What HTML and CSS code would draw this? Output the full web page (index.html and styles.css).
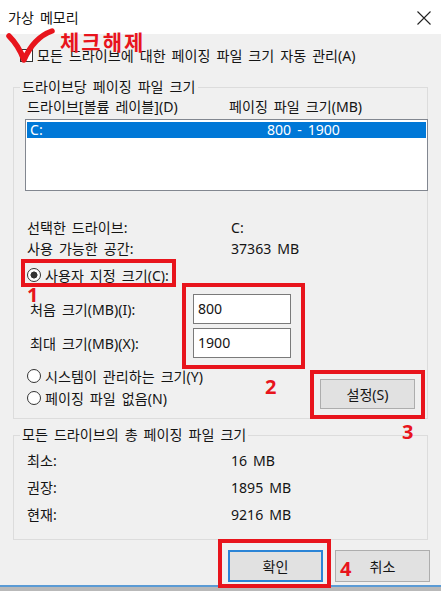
FILE: index.html
```html
<!DOCTYPE html>
<html lang="ko">
<head>
<meta charset="utf-8">
<title>가상 메모리</title>
<link rel="stylesheet" href="styles.css">
</head>
<body>
<div class="titlebar">
  <span class="title">가상 메모리</span>
  <svg class="close" width="14" height="14" viewBox="0 0 14 14"><path d="M0.5 0.5L13.5 13.5M13.5 0.5L0.5 13.5" stroke="#222" stroke-width="1.1" fill="none"/></svg>
</div>

<div class="check-row"><span class="checkbox"></span><span>모든 드라이브에 대한 페이징 파일 크기 자동 관리(A)</span></div>

<fieldset class="group group-drive">
  <legend>드라이브당 페이징 파일 크기</legend>
  <div class="list-head"><span class="col-drive">드라이브[볼륨 레이블](D)</span><span>페이징 파일 크기(MB)</span></div>
  <div class="listbox">
    <div class="list-row selected"><span class="col-name">C:</span><span>800 - 1900</span></div>
  </div>
  <div class="info">
    <span>선택한 드라이브:</span><span>C:</span>
    <span>사용 가능한 공간:</span><span>37363 MB</span>
  </div>
  <div class="radio-row first"><span class="radio checked"></span><span>사용자 지정 크기(C):</span></div>
  <div class="size-row first"><span class="size-label">처음 크기(MB)(I):</span><span class="input">800</span></div>
  <div class="size-row"><span class="size-label">최대 크기(MB)(X):</span><span class="input">1900</span></div>
  <div class="bottom-row">
    <div class="radios">
      <div class="radio-row"><span class="radio"></span><span>시스템이 관리하는 크기(Y)</span></div>
      <div class="radio-row"><span class="radio"></span><span>페이징 파일 없음(N)</span></div>
    </div>
    <button class="btn btn-set">설정(S)</button>
  </div>
</fieldset>

<fieldset class="group group-total">
  <legend>모든 드라이브의 총 페이징 파일 크기</legend>
  <div class="totals">
    <span>최소:</span><span>16 MB</span>
    <span>권장:</span><span>1895 MB</span>
    <span>현재:</span><span>9216 MB</span>
  </div>
</fieldset>

<div class="buttons">
  <button class="btn btn-default">확인</button>
  <button class="btn">취소</button>
</div>
<div class="frame-bottom"></div>

<svg class="mark" width="60" height="40" viewBox="0 25 60 40"><path d="M9 36 C14 41 20 49 24 60 C30 46 38 36 52 31" stroke="#e8141c" stroke-width="5.5" stroke-linecap="round" stroke-linejoin="round" fill="none"/></svg>
<span class="note">체크해제</span>
<div class="redbox box1"></div>
<div class="redbox box2"></div>
<div class="redbox box3"></div>
<div class="redbox box4"></div>
<span class="num n1">1</span>
<span class="num n2">2</span>
<span class="num n3">3</span>
<span class="num n4">4</span>
</body>
</html>
```

FILE: styles.css
```css
html, body {
  margin: 0;
  padding: 0;
}
body {
  width: 441px;
  height: 591px;
  background: #f0f0f0;
  font-family: "Noto Sans", "Noto Sans CJK KR", sans-serif;
  font-size: 14.1px;
  word-spacing: 2.3px;
  color: #141414;
  position: relative;
  overflow: hidden;
}
.titlebar {
  height: 34px;
  background: #fff;
  display: flex;
  align-items: center;
  justify-content: space-between;
  padding: 0 10px 0 8px;
  box-sizing: border-box;
}
.close {
  display: block;
  margin-top: 2px;
}
.check-row {
  display: flex;
  align-items: center;
  gap: 4px;
  height: 20px;
  margin: 11px 0 0 20px;
}
.checkbox {
  width: 13px;
  height: 13px;
  border: 1px solid #333;
  background: #fff;
  box-sizing: border-box;
}
.group {
  margin: 13px 13px 0;
  padding: 0 0 9px 11px;
  border: 1px solid #dcdcdc;
  min-width: 0;
}
.group legend {
  padding: 0 2px;
  margin-left: -5px;
  line-height: 18px;
}
.group-total {
  margin-top: 7px;
  padding-bottom: 11px;
}
.list-head {
  display: flex;
  height: 18px;
  line-height: 18px;
  margin-top: 2px;
  padding-left: 2px;
}
.col-drive {
  width: 202px;
}
.listbox {
  margin: 3px -1px 0 0;
  height: 72px;
  border: 1px solid #828790;
  background: #fff;
  box-sizing: border-box;
  padding: 2px 1px;
}
.list-row {
  display: flex;
  height: 16px;
  line-height: 16px;
  padding-left: 3px;
}
.list-row.selected {
  background: #0078d7;
  color: #fff;
}
.col-name {
  width: 237px;
}
.info {
  display: grid;
  grid-template-columns: 204px auto;
  grid-auto-rows: 21px;
  line-height: 21px;
  margin-top: 26px;
  padding-left: 2px;
}
.radio-row {
  display: flex;
  align-items: center;
  gap: 4px;
  height: 22px;
  padding-left: 2px;
}
.radio-row.first {
  margin-top: 5px;
}
.radio {
  width: 14px;
  height: 14px;
  border-radius: 50%;
  border: 1px solid #333;
  background: #fff;
  box-sizing: border-box;
}
.radio.checked {
  background: radial-gradient(circle, #333 0 3.2px, #fff 3.8px);
}
.size-row {
  display: flex;
  align-items: center;
  height: 30px;
  padding-left: 5px;
  margin-top: 4px;
}
.size-row.first {
  margin-top: 8px;
}
.size-label {
  width: 163px;
}
.input {
  width: 98px;
  height: 30px;
  border: 1px solid #7a7a7a;
  background: #fff;
  box-sizing: border-box;
  padding-left: 4px;
  line-height: 28px;
}
.bottom-row {
  display: flex;
  justify-content: space-between;
  align-items: flex-end;
  margin-top: 7px;
}
.btn {
  width: 95px;
  height: 30px;
  background: #e1e1e1;
  border: 1px solid #adadad;
  font: inherit;
  word-spacing: inherit;
  color: inherit;
  padding: 0;
  box-sizing: border-box;
}
.btn-set {
  margin-right: 12px;
}
.totals {
  display: grid;
  grid-template-columns: 204px auto;
  grid-auto-rows: 27px;
  line-height: 27px;
  margin-top: 3px;
  padding-left: 2px;
}
.buttons {
  display: flex;
  justify-content: flex-end;
  gap: 12px;
  margin-top: 10px;
  padding-right: 11px;
}
.buttons .btn {
  height: 32px;
}
.btn-default {
  border: 2px solid #2b84d6;
}
.frame-bottom {
  margin-top: 3px;
  height: 4px;
  border-top: 2px solid #5b9bd5;
  background: #b9b9b9;
}

/* annotations overlaid on the screenshot */
.mark {
  position: absolute;
  left: 0;
  top: 25px;
}
.note {
  position: absolute;
  left: 60px;
  top: 30px;
  color: #e8141c;
  font-family: "Noto Sans CJK KR", sans-serif;
  font-size: 21px;
  font-weight: 700;
  letter-spacing: 2px;
  line-height: 22px;
}
.redbox {
  position: absolute;
  border: 4px solid #e8141c;
  box-sizing: border-box;
}
.box1 { left: 21px; top: 259px; width: 155px; height: 28px; }
.box2 { left: 182px; top: 283px; width: 123px; height: 86px; }
.box3 { left: 310px; top: 370px; width: 115px; height: 49px; }
.box4 { left: 218px; top: 539px; width: 113px; height: 49px; }
.num {
  position: absolute;
  color: #e8141c;
  font-family: "Noto Sans", sans-serif;
  font-size: 20px;
  font-weight: 700;
  line-height: 20px;
}
.n1 { left: 27px; top: 285px; }
.n2 { left: 265px; top: 377px; }
.n3 { left: 402px; top: 422px; }
.n4 { left: 340px; top: 559px; }
```
